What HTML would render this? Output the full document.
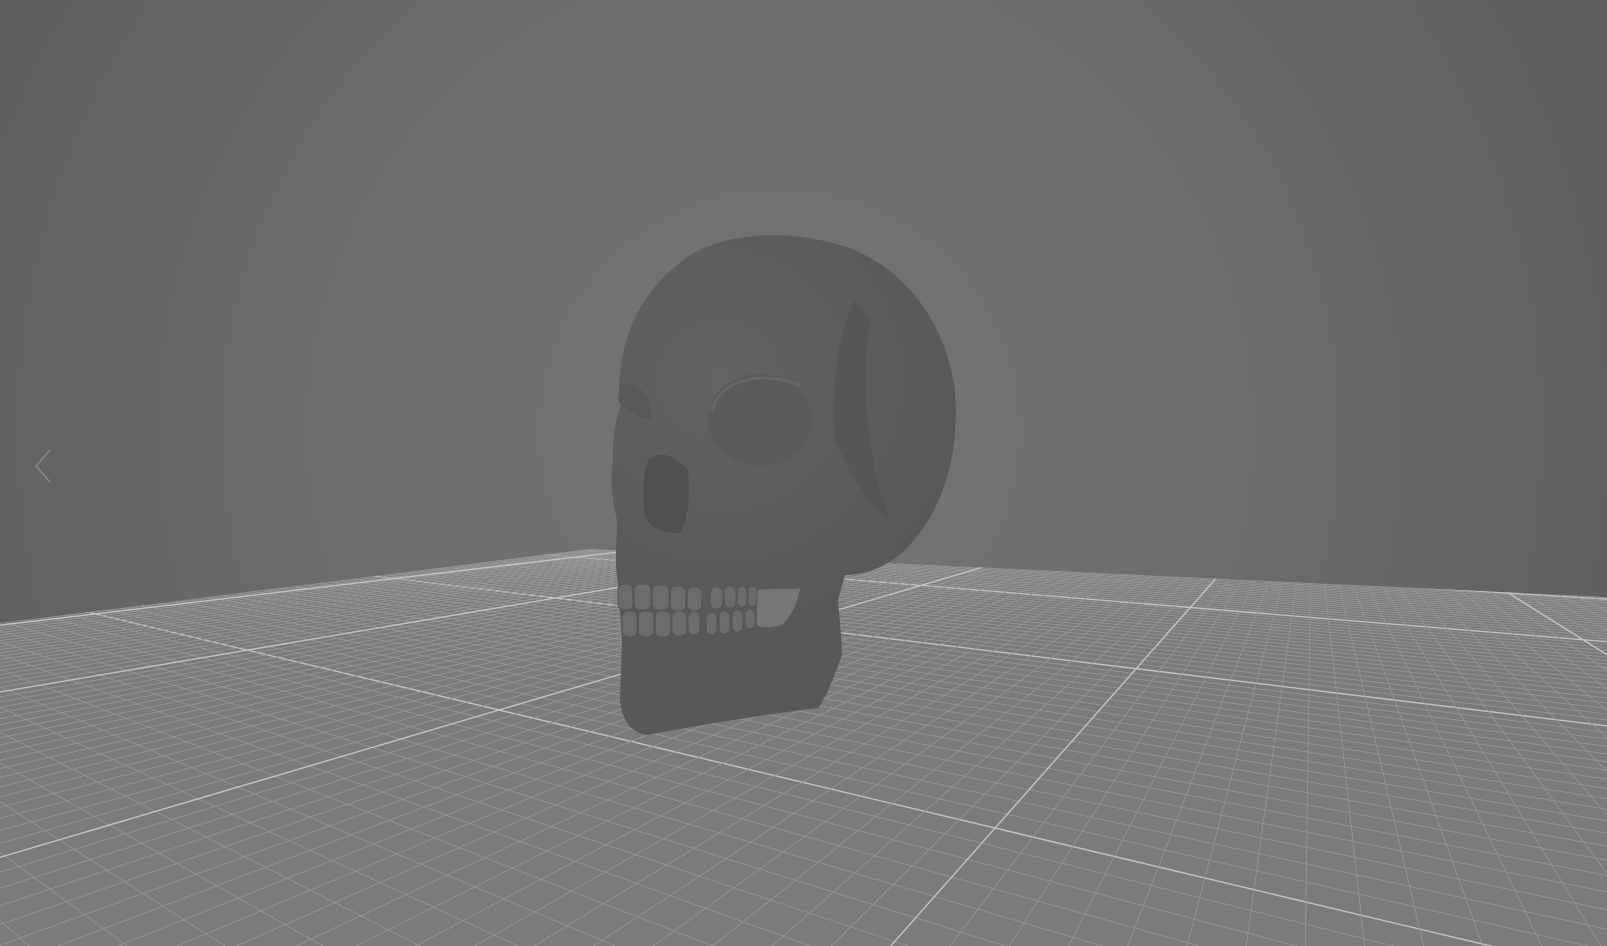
<!DOCTYPE html>
<html><head><meta charset="utf-8"><style>
html,body{margin:0;padding:0;width:1607px;height:946px;overflow:hidden;background:#6a6a6a}
svg{position:absolute;left:0;top:0;overflow:hidden}
</style></head><body>
<svg id="s" width="1607" height="946" viewBox="0 0 1607 946">
<defs>
<radialGradient id="bg" cx="780" cy="430" r="900" gradientUnits="userSpaceOnUse">
<stop offset="0" stop-color="#767676"/><stop offset="0.6" stop-color="#6a6a6a"/><stop offset="1" stop-color="#5e5e5e"/>
</radialGradient>
<radialGradient id="sk" cx="720" cy="380" r="260" gradientUnits="userSpaceOnUse">
<stop offset="0" stop-color="#636363"/><stop offset="1" stop-color="#585858"/>
</radialGradient>
<clipPath id="fl"><polygon points="590,549 0,623 0,946 1607,946 1607,597"/></clipPath>
</defs>
<rect width="1607" height="946" fill="url(#bg)"/>
<polygon points="590,549 0,623 0,946 1607,946 1607,597" fill="#7b7b7b"/>
<g id="grid" clip-path="url(#fl)"></g>
<g id="skull">
<path d="M620,407 C615,340 640,290 690,255 C730,232 790,228 850,248 C905,270 945,320 955,390 C960,450 945,510 905,550 C885,568 865,575 845,575 L838,600 C840,625 842,640 842,655 C835,675 825,700 818,708 C760,715 700,725 647,735 C630,732 622,720 620,700 L622,640 L618,583 C614,560 617,540 617,520 C612,500 610,480 613,460 C612,440 616,420 620,407 Z" fill="url(#sk)"/>
<path d="M757,590 C775,588 790,590 800,588 C798,602 792,615 782,625 C770,628 760,628 757,625 Z" fill="#777"/>
<ellipse cx="760" cy="420" rx="52" ry="46" fill="#5b5b5b"/>
<path d="M712,410 C720,380 760,370 800,385" stroke="#686868" stroke-width="3" fill="none"/>
<path d="M620,385 C640,380 655,400 650,420 C640,418 625,410 618,400 Z" fill="#595959"/>
<path d="M648,460 C660,450 675,455 688,470 C690,500 688,520 680,533 C665,533 650,530 645,515 C642,495 643,475 648,460 Z" fill="#505050"/>
<path d="M855,300 C840,330 830,380 835,440 C845,460 860,500 890,520 C870,470 860,400 870,320 Z" fill="#525252" opacity="0.6"/>
<g fill="#6c6c6c" stroke="#555" stroke-width="1">
<rect x="618" y="584" width="15" height="26" rx="6"/><rect x="634" y="584" width="17" height="26" rx="6"/><rect x="652" y="585" width="17" height="25" rx="6"/><rect x="670" y="586" width="16" height="25" rx="6"/><rect x="687" y="587" width="15" height="24" rx="6"/><rect x="710" y="587" width="13" height="22" rx="6"/><rect x="724" y="586" width="12" height="22" rx="6"/><rect x="737" y="586" width="10" height="21" rx="5"/><rect x="748" y="586" width="9" height="20" rx="4"/>
<rect x="622" y="611" width="15" height="26" rx="6"/><rect x="638" y="611" width="16" height="26" rx="6"/><rect x="655" y="611" width="16" height="26" rx="6"/><rect x="672" y="611" width="15" height="25" rx="6"/><rect x="688" y="611" width="12" height="24" rx="6"/><rect x="706" y="612" width="11" height="23" rx="5"/><rect x="719" y="611" width="11" height="23" rx="5"/><rect x="732" y="610" width="11" height="22" rx="5"/><rect x="745" y="609" width="10" height="20" rx="5"/>
</g>
</g>
<path d="M50,450 L36,466 L50,482" stroke="#8a8a8a" stroke-width="1.5" fill="none"/>
</svg>
<script>
(function(){
var O=[499,710],V1=[1312,470],V2=[-522,467];
function P(s,t){var w=1+s+t;return [(O[0]+s*V1[0]+t*V2[0])/w,(O[1]+s*V1[1]+t*V2[1])/w];}
function inv(X){var a=X[0]-V1[0],b=X[0]-V2[0],c=X[1]-V1[1],d=X[1]-V2[1],e=O[0]-X[0],f=O[1]-X[1];var det=a*d-b*c;return [(e*d-b*f)/det,(a*f-e*c)/det];}
var pts=[[590,549],[0,623],[0,946],[1607,946],[1607,597]];
var smin=1e9,smax=-1e9,tmin=1e9,tmax=-1e9;
pts.forEach(function(p){var q=inv(p);smin=Math.min(smin,q[0]);smax=Math.max(smax,q[0]);tmin=Math.min(tmin,q[1]);tmax=Math.max(tmax,q[1]);});
smin=Math.max(smin,-3);tmin=Math.max(tmin,-3);smax=Math.min(smax,40);tmax=Math.min(tmax,40);
var DS=0.54,DT=0.327,N=20,h='';
function line(a,b,maj){h+='<line x1="'+a[0].toFixed(1)+'" y1="'+a[1].toFixed(1)+'" x2="'+b[0].toFixed(1)+'" y2="'+b[1].toFixed(1)+'" stroke="'+(maj?'#c4c4c4':'#979797')+'" stroke-width="'+(maj?1.4:0.8)+'"/>';}
var ds=DS/N,dt=DT/N;
var k0=Math.floor(smin/ds)-1,k1=Math.ceil(smax/ds)+1;
for(var k=k0;k<=k1;k++){var s=k*ds;var lo=Math.max(tmin,-(1+s)+0.01),hi=tmax;if(hi<=lo)continue;line(P(s,lo),P(s,hi),((k%N)+N)%N==0);}
var j0=Math.floor(tmin/dt)-1,j1=Math.ceil(tmax/dt)+1;
for(var j=j0;j<=j1;j++){var t=j*dt;var lo=Math.max(smin,-(1+t)+0.01),hi=smax;if(hi<=lo)continue;line(P(lo,t),P(hi,t),((j%N)+N)%N==0);}
document.getElementById('grid').innerHTML=h;
})();
</script>
</body></html>
